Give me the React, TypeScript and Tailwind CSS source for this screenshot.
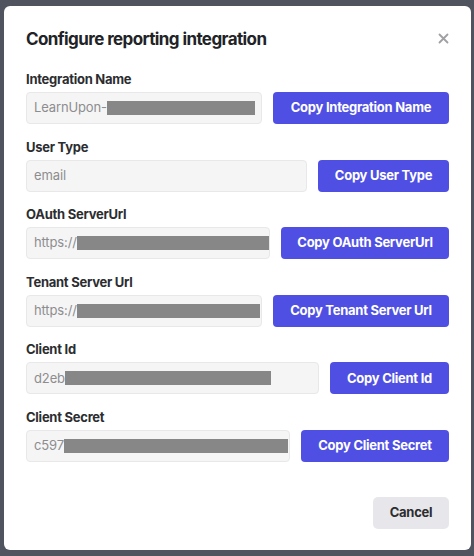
import React from "react";

type Field = {
  label: string;
  prefix: string;
  bar: number;
  button: string;
  btnW: string;
};

const fields: Field[] = [
  { label: "Integration Name", prefix: "LearnUpon-", bar: 148, button: "Copy Integration Name", btnW: "w-[176px]" },
  { label: "User Type", prefix: "email", bar: 0, button: "Copy User Type", btnW: "w-[131px]" },
  { label: "OAuth ServerUrl", prefix: "https://", bar: 200, button: "Copy OAuth ServerUrl", btnW: "w-[168px]" },
  { label: "Tenant Server Url", prefix: "https://", bar: 183, button: "Copy Tenant Server Url", btnW: "w-[176px]" },
  { label: "Client Id", prefix: "d2eb", bar: 206, button: "Copy Client Id", btnW: "w-[119px]" },
  { label: "Client Secret", prefix: "c597", bar: 224, button: "Copy Client Secret", btnW: "w-[148px]" },
];

export default function App() {
  return (
    <div
      className="w-[474px] h-[556px] bg-[#50545e] pt-[6px] pl-[4px] overflow-hidden"
      style={{ fontFamily: "Inter, 'Liberation Sans', sans-serif" }}
    >
      <div className="w-[467px] h-[544px] bg-white rounded-[6px] px-[22px] pt-[20px] pb-[21px] flex flex-col">
        <div className="flex items-center justify-between h-7">
          <h2 className="text-[17px] font-[650] tracking-[-0.035em] text-[#222326]">
            Configure reporting integration
          </h2>
          <button className="w-[12px] h-[12px] flex items-center justify-center -mt-1">
            <svg width="11" height="11" viewBox="0 0 11 11">
              <path d="M1.5 1.5 L9.5 9.5 M9.5 1.5 L1.5 9.5" stroke="#a0a0a4" strokeWidth="1.8" strokeLinecap="round" />
            </svg>
          </button>
        </div>

        <div className="mt-[17px] flex flex-col gap-[14.6px]">
          {fields.map((f) => (
            <div key={f.label} className="flex flex-col">
              <label className="h-4 leading-4 text-[13px] font-[650] tracking-[-0.02em] text-[#2c2d30] mb-[5px]">
                {f.label}
              </label>
              <div className="flex gap-[11px] h-8">
                <div className="flex-1 min-w-0 h-8 bg-[#f5f5f5] border border-[#e8e8e8] rounded-[4px] px-[7px] flex items-center overflow-hidden whitespace-nowrap text-[13px] text-[#8d8d8f] tracking-[-0.01em]">
                  <span>{f.prefix}</span>
                  {f.bar > 0 && (
                    <span className="inline-block h-[14px] bg-[#878787] shrink-0" style={{ width: f.bar }} />
                  )}
                </div>
                <button
                  className={`${f.btnW} shrink-0 h-8 rounded-[4px] bg-[#4f4fe3] text-white text-[13px] font-[650] tracking-[-0.02em] flex items-center justify-center`}
                >
                  {f.button}
                </button>
              </div>
            </div>
          ))}
        </div>

        <div className="mt-auto flex justify-end">
          <button className="w-[76px] h-8 rounded-[5px] bg-[#e7e7eb] text-[#2c2d30] text-[13px] font-[650] tracking-[-0.02em]">
            Cancel
          </button>
        </div>
      </div>
    </div>
  );
}
